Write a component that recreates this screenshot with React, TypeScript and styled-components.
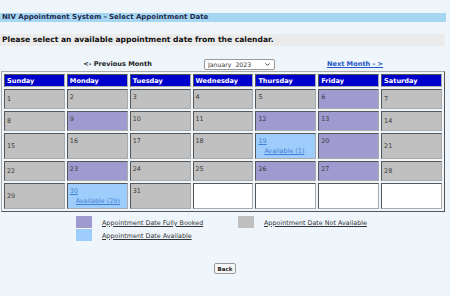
import React from 'react';
import styled, {createGlobalStyle} from 'styled-components';
import {ChevronDown} from 'lucide-react';

const GlobalStyle = createGlobalStyle`
  body {
    margin: 0;
    background-color: #eef6fc;
    font-family: 'DejaVu Sans', Verdana, sans-serif;
    color: #333333;
  }
`;

const Page = styled.div`
  width: 450px;
  display: flex;
  flex-direction: column;
`;

const TitleBar = styled.div`
  margin-top: 13px;
  width: 446px;
  height: 9px;
  line-height: 9px;
  padding-left: 2px;
  box-sizing: border-box;
  background-color: #a7d6f2;
  font-size: 7px;
  font-weight: bold;
  color: #1d2b4f;
`;

const Instructions = styled.div`
  margin-top: 12px;
  width: 445px;
  height: 12px;
  line-height: 12px;
  padding-left: 2px;
  box-sizing: border-box;
  background-color: #ebebeb;
  font-size: 7.6px;
  font-weight: bold;
  color: #111111;
`;

const NavRow = styled.div`
  margin-top: 12px;
  margin-left: 35px;
  height: 12px;
  display: grid;
  grid-template-columns: 165px 85px 140px;
  align-items: center;
  font-size: 6.6px;
  font-weight: bold;
`;

const PrevLabel = styled.span`
  text-align: center;
  color: #222222;
`;

const SelectWrap = styled.div`
  position: relative;
  width: 71px;
  height: 11px;
  margin-left: 4px;
`;

const MonthSelect = styled.select`
  appearance: none;
  width: 71px;
  height: 11px;
  padding: 0 3px;
  font-family: 'DejaVu Sans', Verdana, sans-serif;
  font-size: 6.2px;
  color: #333333;
  background: white;
  border: 1px solid #999999;
  border-radius: 2px;
`;

const SelectArrow = styled(ChevronDown)`
  position: absolute;
  right: 4px;
  top: 2px;
  width: 7px;
  height: 7px;
  color: #333333;
  pointer-events: none;
`;

const NextLink = styled.a`
  text-align: center;
  color: #2255c4;
  text-decoration: underline;
`;

const Calendar = styled.table`
  margin: 1px 0 0 1px;
  width: 444px;
  border: 1px outset #aaaaaa;
  border-spacing: 2px;
  table-layout: fixed;
  font-size: 6.4px;
`;

const HeadCell = styled.th`
  background-color: #0000cc;
  color: white;
  text-align: left;
  font-weight: bold;
  font-size: 6.6px;
  height: 9px;
  padding: 1px 2px;
  border: 1px inset #aaaaaa;
`;

const cellColors: Record<string, string> = {
  open: '#c0c0c0',
  booked: '#9f9bd0',
  available: '#9fcdfb',
  empty: '#ffffff',
};

const DayCell = styled.td<{$kind: string; $middle?: boolean}>`
  background-color: ${p => cellColors[p.$kind]};
  vertical-align: ${p => (p.$middle ? 'middle' : 'top')};
  height: 14px;
  padding: 2px 2px;
  border: 1px inset #aaaaaa;
  color: #3a3a3a;
  line-height: 10px;
`;

const DayLink = styled.a`
  color: #3f7fd6;
  text-decoration: underline;
`;

const AvailLink = styled(DayLink)`
  display: block;
  padding-left: 6px;
`;

const Legend = styled.div`
  margin: 4px 0 0 76px;
  display: grid;
  grid-template-columns: 16px 126px 16px auto;
  column-gap: 10px;
  align-items: center;
  font-size: 6.4px;
`;

const Swatch = styled.div<{$color: string}>`
  width: 16px;
  height: 12px;
  margin-bottom: 1px;
  background-color: ${p => p.$color};
`;

const LegendLabel = styled.span`
  color: #333333;
  text-decoration: underline;
`;

const BackButton = styled.button`
  margin: 21px auto 0;
  height: 11px;
  padding: 0 3px;
  font-family: 'DejaVu Sans', Verdana, sans-serif;
  font-size: 5.5px;
  font-weight: bold;
  color: #222222;
  background: #f6f6f6;
  border: 1px solid #999999;
  border-radius: 2px;
`;

type Day = {n?: number; kind: string; avail?: number};

const weeks: Day[][] = [
  [1, 2, 3, 4, 5, 6, 7].map(n => ({n, kind: n === 6 ? 'booked' : 'open'})),
  [8, 9, 10, 11, 12, 13, 14].map(n => ({n, kind: [9, 12, 13].includes(n) ? 'booked' : 'open'})),
  [15, 16, 17, 18, 19, 20, 21].map(n => ({
    n,
    kind: n === 19 ? 'available' : n === 20 ? 'booked' : 'open',
    avail: n === 19 ? 1 : undefined,
  })),
  [22, 23, 24, 25, 26, 27, 28].map(n => ({n, kind: [23, 26, 27].includes(n) ? 'booked' : 'open'})),
  [
    {n: 29, kind: 'open'},
    {n: 30, kind: 'available', avail: 29},
    {n: 31, kind: 'open'},
    {kind: 'empty'},
    {kind: 'empty'},
    {kind: 'empty'},
    {kind: 'empty'},
  ],
];

const dayNames = ['Sunday', 'Monday', 'Tuesday', 'Wednesday', 'Thursday', 'Friday', 'Saturday'];

const App: React.FC = () => {
  return (
    <Page>
      <GlobalStyle />
      <TitleBar>NIV Appointment System - Select Appointment Date</TitleBar>
      <Instructions>Please select an available appointment date from the calendar.</Instructions>

      <NavRow>
        <PrevLabel>&lt;- Previous Month</PrevLabel>
        <SelectWrap>
          <MonthSelect defaultValue="2023-01">
            <option value="2023-01">January&nbsp;&nbsp;2023</option>
            <option value="2023-02">February&nbsp;&nbsp;2023</option>
          </MonthSelect>
          <SelectArrow strokeWidth={3} />
        </SelectWrap>
        <NextLink href="#">Next Month - &gt;</NextLink>
      </NavRow>

      <Calendar>
        <thead>
          <tr>
            {dayNames.map(d => (
              <HeadCell key={d}>{d}</HeadCell>
            ))}
          </tr>
        </thead>
        <tbody>
          {weeks.map((week, i) => (
            <tr key={i}>
              {week.map((day, j) => (
                <DayCell key={j} $kind={day.kind} $middle={j === 0 || j === 6}>
                  {day.avail ? (
                    <>
                      <DayLink href="#">{day.n}</DayLink>
                      <AvailLink href="#">Available ({day.avail})</AvailLink>
                    </>
                  ) : (
                    day.n
                  )}
                </DayCell>
              ))}
            </tr>
          ))}
        </tbody>
      </Calendar>

      <Legend>
        <Swatch $color={cellColors.booked} />
        <LegendLabel>Appointment Date Fully Booked</LegendLabel>
        <Swatch $color={cellColors.open} />
        <LegendLabel>Appointment Date Not Available</LegendLabel>
        <Swatch $color={cellColors.available} />
        <LegendLabel>Appointment Date Available</LegendLabel>
      </Legend>

      <BackButton>Back</BackButton>
    </Page>
  );
};

export default App;
